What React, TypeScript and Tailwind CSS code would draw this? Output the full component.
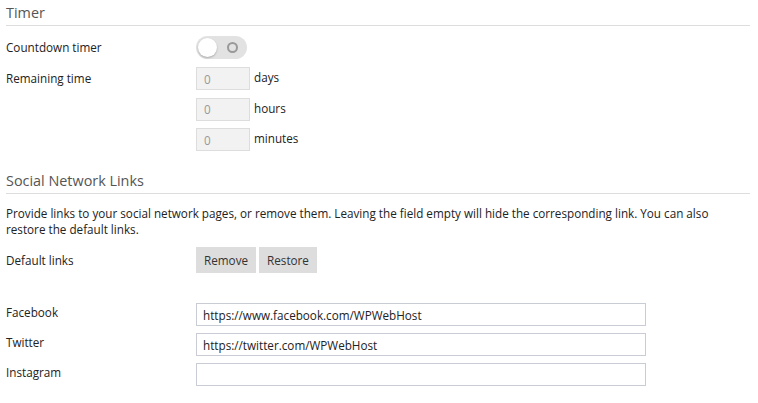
import React from "react";

const font = { fontFamily: '"Open Sans", "Noto Sans", sans-serif' };

function SectionTitle({ children }: { children: React.ReactNode }) {
  return (
    <div className="border-b border-[#dddddd] pb-[2px]">
      <h3 className="text-[14.4px] leading-[20px] text-[#555555] font-normal">{children}</h3>
    </div>
  );
}

function Toggle() {
  return (
    <div className="relative h-[23px] w-[51px] rounded-full bg-[#e2e2e2]">
      <div className="absolute left-[2px] top-[2px] h-[19px] w-[19px] rounded-full bg-white shadow-[0_1px_2px_rgba(0,0,0,0.25)]" />
      <div className="absolute left-[31px] top-[6px] h-[11px] w-[11px] rounded-full border-2 border-[#999999]" />
    </div>
  );
}

function NumberField({ unit }: { unit: string }) {
  return (
    <div className="flex items-center gap-[4px]">
      <input
        readOnly
        value="0"
        className="h-[23px] w-[54px] border border-[#dddddd] bg-[#f2f2f2] px-[7px] text-[11.7px] text-[#999999] outline-none"
      />
      <span className="-mt-[3px] text-[#222222]">{unit}</span>
    </div>
  );
}

function LinkRow({ label, value }: { label: string; value: string }) {
  return (
    <div className="flex items-start">
      <div className="w-[190px]">{label}</div>
      <input
        readOnly
        value={value}
        className="h-[23px] w-[450px] border border-[#c9ccd4] bg-white px-[6px] text-[11.7px] text-[#222222] outline-none"
      />
    </div>
  );
}

export default function App() {
  return (
    <div className="h-[403px] w-[758px] bg-white pl-[6px] pr-[8px] pt-[3px] text-[11.7px] leading-[18px] text-[#222222]" style={font}>
      <SectionTitle>Timer</SectionTitle>

      <div className="mt-[10px] flex items-center">
        <div className="-mt-[2px] w-[190px]">Countdown timer</div>
        <Toggle />
      </div>

      <div className="mt-[8px] flex items-start">
        <div className="w-[190px] pt-[2px]">Remaining time</div>
        <div className="flex flex-col gap-[7.5px]">
          <NumberField unit="days" />
          <NumberField unit="hours" />
          <NumberField unit="minutes" />
        </div>
      </div>

      <div className="mt-[20px]">
        <SectionTitle>Social Network Links</SectionTitle>
      </div>

      <p className="mt-[11px] leading-[16px]">
        Provide links to your social network pages, or remove them. Leaving the field empty will hide the corresponding link. You can also
        restore the default links.
      </p>

      <div className="mt-[10px] flex items-start">
        <div className="w-[190px] pt-[4px]">Default links</div>
        <div className="flex gap-[3px]">
          <button className="h-[26px] bg-[#dddddd] px-[8px] text-[11.7px] text-[#333333]">Remove</button>
          <button className="h-[26px] bg-[#dddddd] px-[8px] text-[11.7px] text-[#333333]">Restore</button>
        </div>
      </div>

      <div className="mt-[30px] flex flex-col gap-[7px]">
        <LinkRow label="Facebook" value="https://www.facebook.com/WPWebHost" />
        <LinkRow label="Twitter" value="https://twitter.com/WPWebHost" />
        <LinkRow label="Instagram" value="" />
      </div>
    </div>
  );
}
